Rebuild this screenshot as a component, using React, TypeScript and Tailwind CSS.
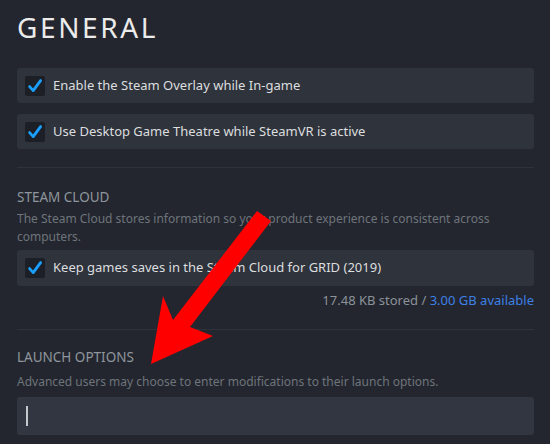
type Option = { id: string; label: string };

const GENERAL: Option[] = [
  { id: "overlay", label: "Enable the Steam Overlay while In-game" },
  { id: "theatre", label: "Use Desktop Game Theatre while SteamVR is active" },
];

function CheckMark() {
  return (
    <svg width="20" height="20" viewBox="0 0 20 20">
      <path
        d="M4.6 10.6 L8.2 14.6 L15.6 4.6"
        fill="none"
        stroke="#1a9fff"
        strokeWidth="2.8"
        strokeLinecap="round"
        strokeLinejoin="round"
      />
    </svg>
  );
}

function CheckRow({ label }: { label: string }) {
  return (
    <div className="flex items-center gap-[8px] rounded-[3px] bg-[#2f333c] pl-[8px] h-full">
      <span className="flex h-[20px] w-[20px] items-center justify-center rounded-[2px] bg-[#1c1f25]">
        <CheckMark />
      </span>
      <span className="text-[13px] text-[#dcdedf]">{label}</span>
    </div>
  );
}

function Heading({ children }: { children: React.ReactNode }) {
  return <div className="text-[13.5px] leading-[20px] uppercase text-[#8f969d]">{children}</div>;
}

export default function App() {
  return (
    <div
      className="relative min-h-[444px] w-full overflow-hidden bg-[#23262e] pl-[17px] pr-[16px]"
      style={{ fontFamily: '"Noto Sans", "Open Sans", sans-serif' }}
    >
      <h1 className="pt-[9px] text-[28px] leading-[36px] font-normal tracking-[2.6px] text-[#ebebeb]">
        GENERAL
      </h1>

      <div className="mt-[23px] flex flex-col gap-[11px]">
        {GENERAL.map((o) => (
          <div key={o.id} className="h-[35px]">
            <CheckRow label={o.label} />
          </div>
        ))}
      </div>

      <div className="mt-[18px] h-px bg-[#2e323a]" />

      <div className="mt-[19px]">
        <Heading>Steam Cloud</Heading>
      </div>
      <p className="mt-[3px] text-[12px] leading-[18px] text-[#6e747b]">
        The Steam Cloud stores information so your product experience is consistent across computers.
      </p>
      <div className="mt-[4px] h-[36px]">
        <CheckRow label="Keep games saves in the Steam Cloud for GRID (2019)" />
      </div>
      <div className="mt-[5px] text-right text-[13px] leading-[18px] text-[#8b929a]">
        17.48 KB stored / <span className="text-[#3d80e6]">3.00 GB available</span>
      </div>

      <div className="mt-[20px] h-px bg-[#2e323a]" />

      <div className="mt-[17px]">
        <Heading>Launch Options</Heading>
      </div>
      <p className="mt-[6px] text-[12px] leading-[18px] text-[#6e747b]">
        Advanced users may choose to enter modifications to their launch options.
      </p>
      <div className="mt-[6px] flex h-[38px] items-center rounded-[3px] bg-[#323640] pl-[9px]">
        <span className="h-[20px] w-[2px] bg-[#c4c7cb]" />
      </div>

      <svg
        className="pointer-events-none absolute left-0 top-0"
        width="550"
        height="444"
        viewBox="0 0 550 444"
      >
        <polygon
          points="257,211 271,221 190,327 213,336 151,364 163,296 173,320"
          fill="#ff0000"
        />
      </svg>
    </div>
  );
}
